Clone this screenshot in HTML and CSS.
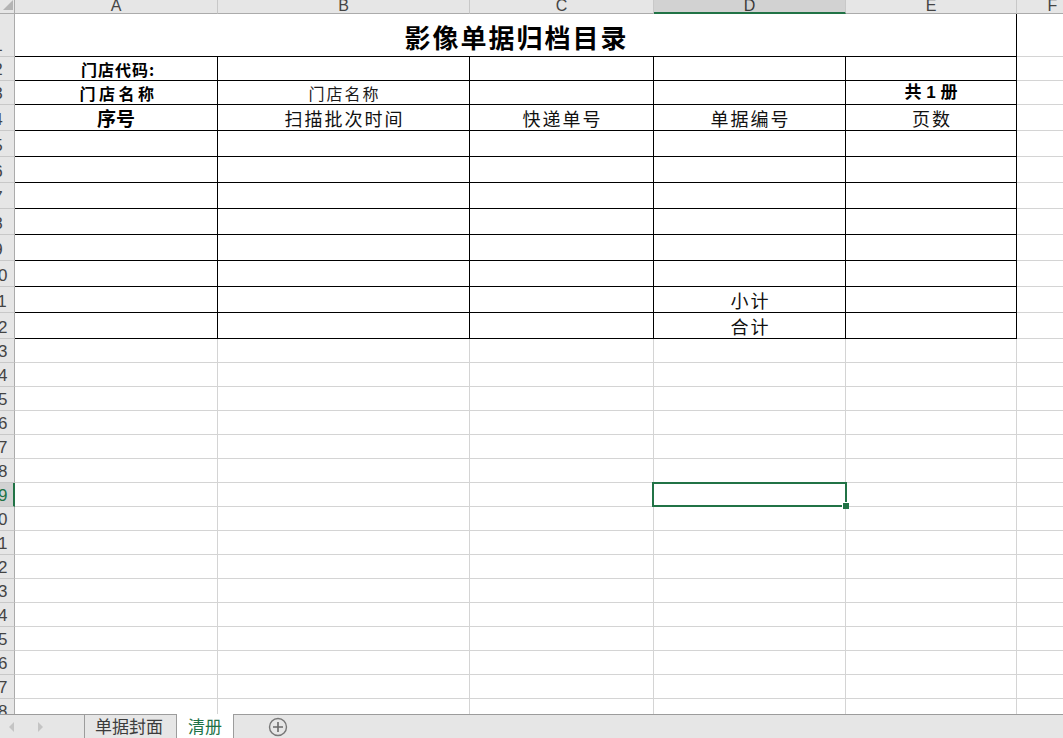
FILE: index.html
```html
<!DOCTYPE html>
<html lang="zh-CN">
<head>
<meta charset="utf-8">
<title>清册</title>
<link rel="stylesheet" href="styles.css">
</head>
<body>
<div class="app">
  <div class="sheet">
    <div class="row colhead">
      <div class="corner"><svg width="14" height="13" viewBox="0 0 14 13"><polygon points="13,0 13,10 3,10" fill="#b4b4b4"/></svg></div>
      <div class="ch">A</div>
      <div class="ch">B</div>
      <div class="ch">C</div>
      <div class="ch sel">D</div>
      <div class="ch">E</div>
      <div class="ch">F</div>
    </div>

    <div class="row h43">
      <div class="rh"><span>1</span></div>
      <div class="c b span5 title">影像单据归档目录</div>
      <div class="c"></div>
    </div>
    <div class="row h24">
      <div class="rh"><span>2</span></div>
      <div class="c b lbl">门店代码:</div>
      <div class="c b"></div>
      <div class="c b"></div>
      <div class="c b"></div>
      <div class="c b"></div>
      <div class="c"></div>
    </div>
    <div class="row h24">
      <div class="rh"><span>3</span></div>
      <div class="c b lbl wide">门店名称</div>
      <div class="c b small">门店名称</div>
      <div class="c b"></div>
      <div class="c b"></div>
      <div class="c b total">共 1 册</div>
      <div class="c"></div>
    </div>
    <div class="row h26">
      <div class="rh"><span>4</span></div>
      <div class="c b seq">序号</div>
      <div class="c b hd">扫描批次时间</div>
      <div class="c b hd">快递单号</div>
      <div class="c b hd">单据编号</div>
      <div class="c b hd">页数</div>
      <div class="c"></div>
    </div>
    <div class="row h26"><div class="rh"><span>5</span></div><div class="c b"></div><div class="c b"></div><div class="c b"></div><div class="c b"></div><div class="c b"></div><div class="c"></div></div>
    <div class="row h26"><div class="rh"><span>6</span></div><div class="c b"></div><div class="c b"></div><div class="c b"></div><div class="c b"></div><div class="c b"></div><div class="c"></div></div>
    <div class="row h26"><div class="rh"><span>7</span></div><div class="c b"></div><div class="c b"></div><div class="c b"></div><div class="c b"></div><div class="c b"></div><div class="c"></div></div>
    <div class="row h26"><div class="rh"><span>8</span></div><div class="c b"></div><div class="c b"></div><div class="c b"></div><div class="c b"></div><div class="c b"></div><div class="c"></div></div>
    <div class="row h26"><div class="rh"><span>9</span></div><div class="c b"></div><div class="c b"></div><div class="c b"></div><div class="c b"></div><div class="c b"></div><div class="c"></div></div>
    <div class="row h26"><div class="rh"><span>10</span></div><div class="c b"></div><div class="c b"></div><div class="c b"></div><div class="c b"></div><div class="c b"></div><div class="c"></div></div>
    <div class="row h26"><div class="rh"><span>11</span></div><div class="c b"></div><div class="c b"></div><div class="c b"></div><div class="c b hd">小计</div><div class="c b"></div><div class="c"></div></div>
    <div class="row h26"><div class="rh"><span>12</span></div><div class="c b"></div><div class="c b"></div><div class="c b"></div><div class="c b hd">合计</div><div class="c b"></div><div class="c"></div></div>

    <div class="row h24"><div class="rh"><span>13</span></div><div class="c"></div><div class="c"></div><div class="c"></div><div class="c"></div><div class="c"></div><div class="c"></div></div>
    <div class="row h24"><div class="rh"><span>14</span></div><div class="c"></div><div class="c"></div><div class="c"></div><div class="c"></div><div class="c"></div><div class="c"></div></div>
    <div class="row h24"><div class="rh"><span>15</span></div><div class="c"></div><div class="c"></div><div class="c"></div><div class="c"></div><div class="c"></div><div class="c"></div></div>
    <div class="row h24"><div class="rh"><span>16</span></div><div class="c"></div><div class="c"></div><div class="c"></div><div class="c"></div><div class="c"></div><div class="c"></div></div>
    <div class="row h24"><div class="rh"><span>17</span></div><div class="c"></div><div class="c"></div><div class="c"></div><div class="c"></div><div class="c"></div><div class="c"></div></div>
    <div class="row h24"><div class="rh"><span>18</span></div><div class="c"></div><div class="c"></div><div class="c"></div><div class="c"></div><div class="c"></div><div class="c"></div></div>
    <div class="row h24"><div class="rh rsel"><span>19</span></div><div class="c"></div><div class="c"></div><div class="c"></div><div class="c active"></div><div class="c"></div><div class="c"></div></div>
    <div class="row h24"><div class="rh"><span>20</span></div><div class="c"></div><div class="c"></div><div class="c"></div><div class="c"></div><div class="c"></div><div class="c"></div></div>
    <div class="row h24"><div class="rh"><span>21</span></div><div class="c"></div><div class="c"></div><div class="c"></div><div class="c"></div><div class="c"></div><div class="c"></div></div>
    <div class="row h24"><div class="rh"><span>22</span></div><div class="c"></div><div class="c"></div><div class="c"></div><div class="c"></div><div class="c"></div><div class="c"></div></div>
    <div class="row h24"><div class="rh"><span>23</span></div><div class="c"></div><div class="c"></div><div class="c"></div><div class="c"></div><div class="c"></div><div class="c"></div></div>
    <div class="row h24"><div class="rh"><span>24</span></div><div class="c"></div><div class="c"></div><div class="c"></div><div class="c"></div><div class="c"></div><div class="c"></div></div>
    <div class="row h24"><div class="rh"><span>25</span></div><div class="c"></div><div class="c"></div><div class="c"></div><div class="c"></div><div class="c"></div><div class="c"></div></div>
    <div class="row h24"><div class="rh"><span>26</span></div><div class="c"></div><div class="c"></div><div class="c"></div><div class="c"></div><div class="c"></div><div class="c"></div></div>
    <div class="row h24"><div class="rh"><span>27</span></div><div class="c"></div><div class="c"></div><div class="c"></div><div class="c"></div><div class="c"></div><div class="c"></div></div>
    <div class="row h24"><div class="rh"><span>28</span></div><div class="c"></div><div class="c"></div><div class="c"></div><div class="c"></div><div class="c"></div><div class="c"></div></div>
  </div>

  <div class="tabbar">
    <div class="nav">
      <svg width="84" height="23" viewBox="0 0 84 23"><polygon points="14,7 14,17 9,12" fill="#c4c4c4"/><polygon points="38,7 38,17 43,12" fill="#c4c4c4"/></svg>
    </div>
    <div class="tab">单据封面</div>
    <div class="tab on">清册</div>
    <div class="add">
      <svg width="20" height="20" viewBox="0 0 20 20"><circle cx="10" cy="10" r="8.5" fill="none" stroke="#777" stroke-width="1.4"/><path d="M10 5v10M5 10h10" stroke="#6a6a6a" stroke-width="1.6"/></svg>
    </div>
  </div>
</div>
</body>
</html>
```

FILE: styles.css
```css
* { box-sizing: border-box; }
html, body {
  margin: 0;
  padding: 0;
  background: #fff;
}
body {
  width: 1063px;
  height: 738px;
  overflow: hidden;
  font-family: "Liberation Sans", "Noto Sans CJK SC", sans-serif;
}
.app {
  display: flex;
  flex-direction: column;
  width: 1063px;
  height: 738px;
}
.sheet {
  flex: 1;
  overflow: hidden;
  min-height: 0;
}
.row {
  display: grid;
  grid-template-columns: 15px 203px 252px 184px 192px 171px 72px;
  grid-template-rows: 100%;
  width: 1089px;
}
.h43 { height: 43px; }
.h24 { height: 24px; }
.h26 { height: 26px; }

/* column header */
.colhead { height: 14px; }
.corner {
  background: #e6e6e6;
  border-right: 1px solid #ababab;
  border-bottom: 1px solid #ababab;
  overflow: hidden;
}
.corner svg { display: block; }
.ch {
  background: #e6e6e6;
  border-right: 1px solid #c8c8c8;
  border-bottom: 1px solid #ababab;
  color: #444;
  font-family: "Liberation Sans", sans-serif;
  font-size: 16px;
  line-height: 12px;
  text-align: center;
  overflow: hidden;
}
.ch.sel {
  background: #d2d2d2;
  border-bottom: 2px solid #217346;
  color: #3a3a3a;
}

/* row header */
.rh {
  background: #e6e6e6;
  border-right: 1px solid #ababab;
  border-bottom: 1px solid #c8c8c8;
  overflow: hidden;
  display: flex;
  align-items: flex-end;
  color: #444;
  font-family: "Liberation Sans", sans-serif;
  font-size: 17px;
}
.rh span {
  flex: 0 0 30px;
  margin-left: -17px;
  text-align: center;
  line-height: 20px;
}
.rh.rsel {
  background: #d2d2d2;
  border-right: 2px solid #217346;
  color: #217346;
}

/* cells */
.c {
  border-right: 1px solid #d4d4d4;
  border-bottom: 1px solid #d4d4d4;
  display: flex;
  align-items: center;
  justify-content: center;
  color: #000;
  white-space: nowrap;
  line-height: 18px;
  min-height: 0;
}
.c.b {
  border-right-color: #000;
  border-bottom-color: #000;
}
.span5 { grid-column: span 5; }

.title {
  font-family: "Noto Sans CJK SC", sans-serif;
  font-weight: 700;
  font-size: 26px;
  line-height: 30px;
  letter-spacing: 2px;
  padding-top: 3px;
  padding-left: 2px;
}
.lbl {
  font-family: "Noto Sans CJK SC", sans-serif;
  font-weight: 700;
  font-size: 16px;
  line-height: 18px;
  letter-spacing: 1px;
  padding-left: 4px;
}
.lbl.wide {
  letter-spacing: 3.5px;
  padding-left: 5px;
}
.small {
  font-family: "Noto Sans CJK SC", sans-serif;
  font-size: 16px;
  line-height: 18px;
  letter-spacing: 2px;
  color: #1a1a1a;
  padding-left: 2px;
}
.total {
  font-family: "Liberation Sans", "Noto Sans CJK SC", sans-serif;
  font-weight: 700;
  font-size: 17px;
  line-height: 18px;
}
.seq {
  font-family: "Noto Sans CJK SC", sans-serif;
  font-weight: 700;
  font-size: 19px;
  line-height: 20px;
  padding-top: 1px;
}
.hd {
  font-family: "Noto Sans CJK SC", sans-serif;
  font-size: 18px;
  line-height: 20px;
  letter-spacing: 2px;
  padding-left: 2px;
  color: #111;
}

/* active cell */
.active { position: relative; }
.active::after {
  content: "";
  position: absolute;
  left: -2px;
  top: -1px;
  right: -2px;
  bottom: -1px;
  border: 2px solid #217346;
}
.active::before {
  content: "";
  position: absolute;
  left: 189px;
  top: 20px;
  width: 6px;
  height: 6px;
  background: #217346;
  box-shadow: -1px -1px 0 0 #fff;
  z-index: 2;
}

/* tab bar */
.tabbar {
  flex: 0 0 24px;
  height: 24px;
  background: #e6e6e6;
  border-top: 1px solid #9c9c9c;
  display: flex;
  align-items: stretch;
}
.nav {
  width: 85px;
  border-right: 1px solid #9c9c9c;
}
.nav svg { display: block; }
.tab {
  font-family: "Noto Sans CJK SC", sans-serif;
  font-size: 17px;
  line-height: 22px;
  color: #3c3c3c;
  padding: 0 12px 0 10px;
  border-right: 1px solid #9c9c9c;
  width: 92px;
}
.tab.on {
  background: #fff;
  color: #217346;
  margin-top: -1px;
  line-height: 24px;
  width: 57px;
  padding: 0 0 0 11px;
}
.add {
  display: flex;
  align-items: center;
  padding-left: 34px;
}
.add svg { display: block; }
```
